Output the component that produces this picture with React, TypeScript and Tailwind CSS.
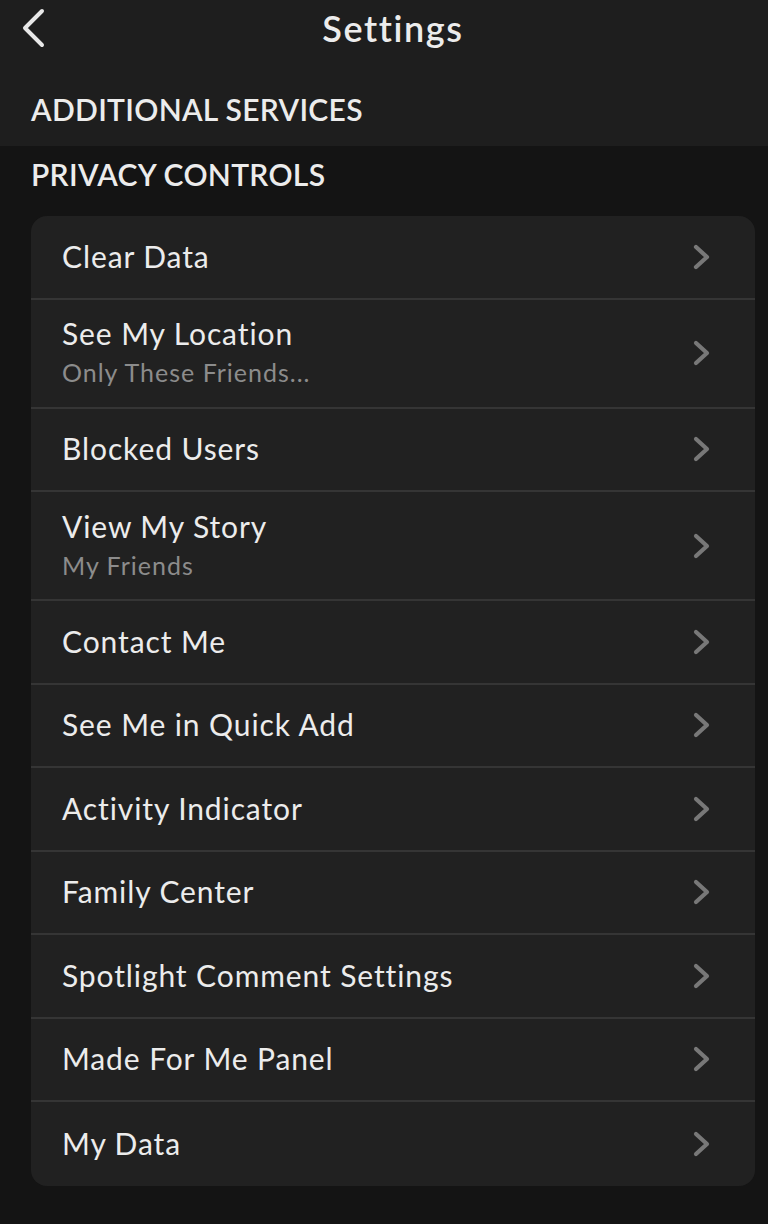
type Row = { label: string; sub?: string };

const ROWS: Row[] = [
  { label: "Clear Data" },
  { label: "See My Location", sub: "Only These Friends..." },
  { label: "Blocked Users" },
  { label: "View My Story", sub: "My Friends" },
  { label: "Contact Me" },
  { label: "See Me in Quick Add" },
  { label: "Activity Indicator" },
  { label: "Family Center" },
  { label: "Spotlight Comment Settings" },
  { label: "Made For Me Panel" },
  { label: "My Data" },
];

function Chevron() {
  return (
    <svg width="22" height="28" viewBox="0 0 22 28" className="shrink-0">
      <path
        d="M5 4 L16 14 L5 24"
        fill="none"
        stroke="#787878"
        strokeWidth="4.2"
        strokeLinecap="round"
        strokeLinejoin="round"
      />
    </svg>
  );
}

function SettingsRow({ row, last }: { row: Row; last: boolean }) {
  return (
    <div
      className={`flex items-center justify-between pl-[31px] pr-[42px] ${
        row.sub ? "h-[109px]" : "h-[83.5px]"
      } ${last ? "" : "border-b-2 border-[#353535]"}`}
    >
      <div className="flex flex-col">
        <span className="-mt-[2px] text-[30px] leading-[36px] tracking-[0.9px] text-[#ececec]">
          {row.label}
        </span>
        {row.sub && (
          <span className="mt-[4px] text-[25px] leading-[34px] tracking-[1px] text-[#8c8c8c]">
            {row.sub}
          </span>
        )}
      </div>
      <Chevron />
    </div>
  );
}

export default function App() {
  return (
    <div className="min-h-[1224px] w-[768px] bg-[#141414] font-['Lato','Open_Sans',sans-serif]">
      <div className="bg-[#1e1e1e] pb-[18px]">
        <div className="relative flex h-[56px] items-center justify-center">
          <svg
            width="30"
            height="40"
            viewBox="0 0 30 40"
            className="absolute left-[18px] top-[8px]"
          >
            <path
              d="M24 3 L7 20 L24 37"
              fill="none"
              stroke="#e8e8e8"
              strokeWidth="4"
              strokeLinecap="round"
              strokeLinejoin="round"
            />
          </svg>
          <span className="ml-[18px] text-[36px] font-semibold tracking-[1.6px] text-[#ececec]">
            Settings
          </span>
        </div>
        <div className="mt-[34px] px-[31px] text-[30px] font-semibold leading-[38px] tracking-[0.3px] text-[#ececec]">
          ADDITIONAL SERVICES
        </div>
      </div>
      <div className="px-[31px] pt-[9px] text-[30px] font-semibold leading-[38px] tracking-[0.3px] text-[#ececec]">
        PRIVACY CONTROLS
      </div>
      <div className="ml-[31px] mr-[13px] mt-[23px] overflow-hidden rounded-[16px] bg-[#212121]">
        {ROWS.map((row, i) => (
          <SettingsRow key={row.label} row={row} last={i === ROWS.length - 1} />
        ))}
      </div>
    </div>
  );
}
